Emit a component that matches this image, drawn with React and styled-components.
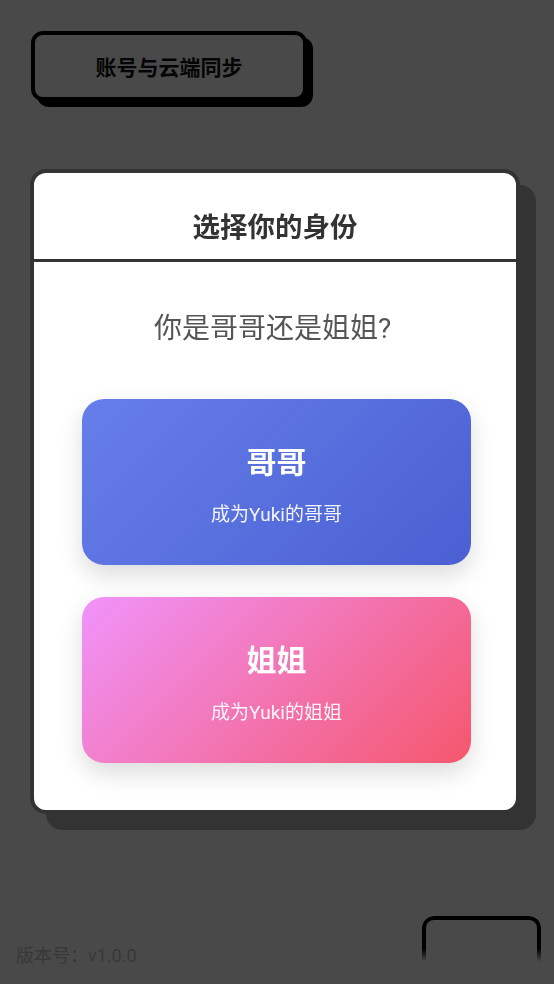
import React from 'react';
import styled, { createGlobalStyle } from 'styled-components';

const GlobalStyle = createGlobalStyle`
  * { box-sizing: border-box; }
  html, body { margin: 0; padding: 0; }
  body {
    font-family: Roboto, "Noto Sans CJK SC", sans-serif;
    background: #f5f5f5;
  }
`;

const Page = styled.div`
  min-height: 100vh;
  display: flex;
  flex-direction: column;
  padding: 31px 13px 14px 16px;
`;

const SyncButton = styled.button`
  width: 276px;
  height: 70px;
  margin-left: 15px;
  border: 4px solid #000;
  border-radius: 12px;
  background: #f5f5f5;
  box-shadow: 6px 6px 0 #000;
  font-family: inherit;
  font-size: 21px;
  font-weight: 700;
  color: #111;
  cursor: pointer;
`;

const Footer = styled.div`
  margin-top: auto;
  display: flex;
  justify-content: space-between;
  align-items: flex-end;
`;

const Version = styled.span`
  font-size: 18px;
  color: #bbb;
  line-height: 24px;
  margin-bottom: 2px;
`;

const GhostButton = styled.div`
  width: 119px;
  height: 54px;
  border: 4px solid #000;
  border-bottom: none;
  border-radius: 12px 12px 0 0;
  -webkit-mask-image: linear-gradient(to bottom, #000 60%, transparent 85%);
  mask-image: linear-gradient(to bottom, #000 60%, transparent 85%);
`;

const Overlay = styled.div`
  position: fixed;
  inset: 0;
  background: rgba(0, 0, 0, 0.7);
  display: flex;
  align-items: center;
  justify-content: center;
`;

const Modal = styled.div`
  width: 490px;
  background: #fff;
  border: 4px solid #333;
  border-radius: 16px;
  box-shadow: 16px 16px 0 #333;
  overflow: hidden;
  margin: 0 0 2px -4px;
`;

const ModalHeader = styled.div`
  height: 89px;
  display: flex;
  align-items: center;
  justify-content: center;
  border-bottom: 3px solid #333;
`;

const ModalTitle = styled.h2`
  margin: 18px 0 0;
  font-size: 27.5px;
  font-weight: 700;
  color: #333;
`;

const ModalBody = styled.div`
  padding: 49px 45px 47px 48px;
  display: flex;
  flex-direction: column;
  gap: 32px;
`;

const Question = styled.p`
  margin: 0 0 20px;
  padding-right: 8px;
  text-align: center;
  font-size: 28px;
  line-height: 36px;
  color: #555;
`;

const gradients = {
  brother: 'linear-gradient(135deg, #667eea 0%, #4a60d2 100%)',
  sister: 'linear-gradient(135deg, #f093fb 0%, #f5576c 100%)',
};

const RoleCard = styled.button`
  height: 166px;
  border: none;
  border-radius: 22px;
  background: ${p => gradients[p.$variant]};
  box-shadow: 0 10px 24px rgba(0, 0, 0, 0.14);
  display: flex;
  flex-direction: column;
  align-items: center;
  justify-content: center;
  gap: 20px;
  padding: 6px 0 0;
  font-family: inherit;
  color: #fff;
  cursor: pointer;
`;

const RoleName = styled.span`
  font-size: 30px;
  line-height: 40px;
  font-weight: 700;
`;

const RoleDesc = styled.span`
  font-size: 19px;
  line-height: 24px;
  color: rgba(255, 255, 255, 0.92);
`;

const roles = [
  { key: 'brother', name: '哥哥', desc: '成为Yuki的哥哥' },
  { key: 'sister', name: '姐姐', desc: '成为Yuki的姐姐' },
];

export default function App() {
  return (
    <>
      <GlobalStyle />
      <Page>
        <SyncButton>账号与云端同步</SyncButton>
        <Footer>
          <Version>版本号：v1.0.0</Version>
          <GhostButton />
        </Footer>
      </Page>
      <Overlay>
        <Modal>
          <ModalHeader>
            <ModalTitle>选择你的身份</ModalTitle>
          </ModalHeader>
          <ModalBody>
            <Question>你是哥哥还是姐姐?</Question>
            {roles.map(r => (
              <RoleCard key={r.key} $variant={r.key}>
                <RoleName>{r.name}</RoleName>
                <RoleDesc>{r.desc}</RoleDesc>
              </RoleCard>
            ))}
          </ModalBody>
        </Modal>
      </Overlay>
    </>
  );
}
